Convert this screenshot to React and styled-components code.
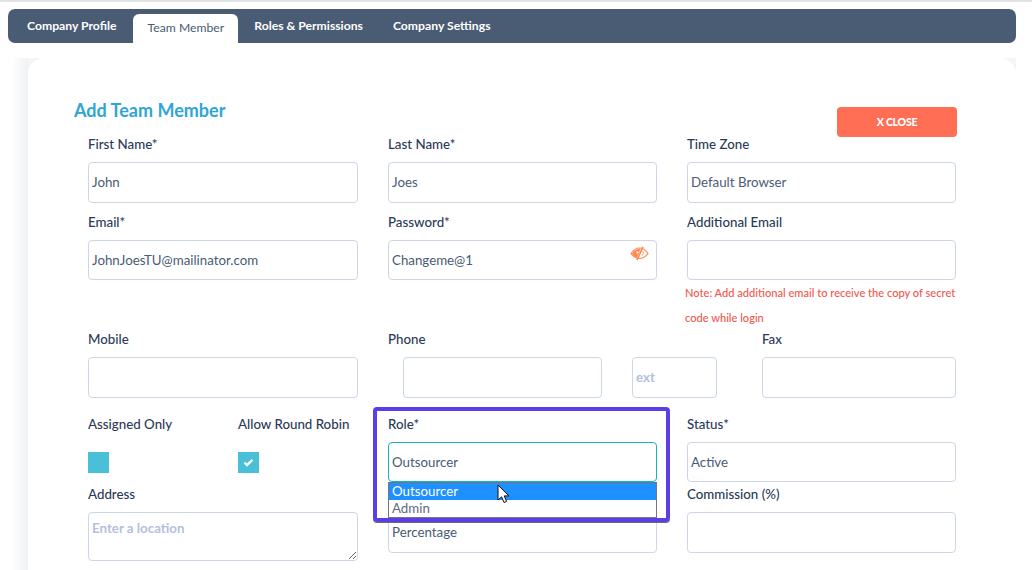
import React from "react"
import styled, { createGlobalStyle } from "styled-components"

const Global = createGlobalStyle`
  html, body {
    margin: 0;
    padding: 0;
    background: #fff;
    font-family: "Lato", "Liberation Sans", sans-serif;
  }
  * {
    box-sizing: border-box;
  }
`

const Page = styled.div`
  width: 1032px;
  height: 570px;
  overflow: hidden;
  border-top: 2px solid #e2e2e2;
  padding: 7px 16px 0 8px;
`
const TabBar = styled.div`
  display: flex;
  align-items: flex-end;
  height: 34px;
  padding-left: 4px;
  background: #4a5b74;
  border-radius: 7px;
`
const Tab = styled.div`
  height: ${({ $active }) => ($active ? "29px" : "34px")};
  margin: ${({ $active }) => ($active ? "0 1px" : "0")};
  padding: ${({ $active }) => ($active ? "6px 14px 0 15px" : "0 15px")};
  line-height: ${({ $active }) => ($active ? "16px" : "33px")};
  font-size: 12.2px;
  font-weight: ${({ $active }) => ($active ? 400 : 700)};
  color: ${({ $active }) => ($active ? "#4a5b74" : "#fff")};
  background: ${({ $active }) => ($active ? "#fff" : "transparent")};
  border-radius: 6px 6px 0 0;
  white-space: nowrap;
`
const CardShell = styled.div`
  margin: 15px 0 0 4px;
  padding-left: 16px;
  background: linear-gradient(90deg, #fff 0, #f0f1f4 16px, #f5f5f5 16px);
`
const Card = styled.div`
  position: relative;
  height: 600px;
  padding: 42px 59px 0 46px;
  background: #fff;
  border-radius: 16px 16px 0 0;
`
const TitleRow = styled.div`
  display: flex;
  justify-content: space-between;
  height: 35px;
`
const Title = styled.h2`
  margin: 0;
  font-size: 18px;
  line-height: 20px;
  font-weight: 700;
  color: #2ea5d8;
`
const CloseButton = styled.div`
  width: 120px;
  height: 30px;
  margin-top: 7px;
  background: #ff6e55;
  border-radius: 4px;
  color: #fff;
  font-size: 10.6px;
  font-weight: 900;
  letter-spacing: -0.3px;
  line-height: 30px;
  text-align: center;
`
const Form = styled.div`
  padding-left: 14px;
`
const Row = styled.div`
  display: grid;
  grid-template-columns: ${({ $columns }) => $columns || "270px 269px 269px"};
  column-gap: 30px;
  margin-bottom: ${({ $gap }) => $gap ?? 10}px;
`
const Field = styled.div`
  min-width: 0;
  padding-left: ${({ $indent }) => $indent || 0}px;
`
const Pair = styled.div`
  display: grid;
  grid-template-columns: 150px 120px;
`
const Label = styled.div`
  height: 18px;
  margin-bottom: 9px;
  font-size: 13.3px;
  font-weight: 500;
  line-height: 18px;
  color: #2b3a57;
  white-space: nowrap;
`
const InputWrap = styled.div`
  position: relative;
`
const Input = styled.input`
  display: block;
  width: 100%;
  height: ${({ $h }) => $h || 40}px;
  padding: 0 3px ${({ $h }) => ($h ? 2 : 0)}px;
  background: #fff;
  border: 1px solid ${({ $focus }) => ($focus ? "#12b5b8" : "#cdd6e6")};
  border-radius: 4px;
  outline: none;
  font-family: inherit;
  font-size: 13.3px;
  color: #4a5b74;
  &::placeholder {
    color: #b4c0dc;
    font-weight: 700;
    opacity: 1;
  }
`
const PhoneInput = styled(Input)`
  width: 199px;
  margin-left: 15px;
`
const ExtInput = styled(Input)`
  margin-top: 27px;
`
const TextArea = styled.textarea`
  display: block;
  width: 100%;
  height: 49px;
  padding: 7px 3px;
  background: #fff;
  border: 1px solid #cdd6e6;
  border-radius: 4px;
  outline: none;
  font-family: inherit;
  font-size: 13.3px;
  color: #4a5b74;
  &::placeholder {
    color: #b4c0dc;
    font-weight: 700;
    opacity: 1;
  }
`
const EyeIcon = styled.svg`
  position: absolute;
  top: 6px;
  right: 8px;
  width: 19px;
  height: 15px;
`
const Note = styled.div`
  height: 50px;
  margin: 0 -4px 0 -2px;
  font-size: 11.1px;
  font-weight: 500;
  line-height: 25px;
  color: #f2564f;
`
const PhoneRow = styled.div`
  display: grid;
  grid-template-columns: 214px 85px 209px;
  column-gap: 30px;
`
const Check = styled.div`
  display: flex;
  align-items: center;
  justify-content: center;
  width: 21px;
  height: 21px;
  margin-top: 19px;
  background: #49bfd8;
`
const Dropdown = styled.div`
  position: absolute;
  top: 100%;
  left: 0;
  right: 0;
  z-index: 2;
  background: #fff;
  border: 1px solid #767676;
  font-size: 13.3px;
  line-height: 16px;
`
const Option = styled.div`
  height: 17px;
  padding-left: 3px;
  background: ${({ $selected }) => ($selected ? "#1e90ff" : "#fff")};
  color: ${({ $selected }) => ($selected ? "#fff" : "#5d6b80")};
`
const Highlight = styled.div`
  position: absolute;
  left: 345px;
  top: 349px;
  width: 297px;
  height: 115px;
  border: 4px solid #5b3ee8;
  border-radius: 4px;
  box-shadow: 0 1px 0 #6b6b6b;
  pointer-events: none;
  z-index: 3;
`
const Cursor = styled.svg`
  position: absolute;
  left: 469px;
  top: 426px;
  width: 14px;
  height: 21px;
  z-index: 4;
`

function Text({ label, value, h }) {
  return (
    <Field>
      <Label>{label}</Label>
      <Input $h={h} readOnly value={value || ""} />
    </Field>
  )
}

function App() {
  return (
    <Page>
      <Global />
      <TabBar>
        <Tab>Company Profile</Tab>
        <Tab $active>Team Member</Tab>
        <Tab>Roles &amp; Permissions</Tab>
        <Tab>Company Settings</Tab>
      </TabBar>
      <CardShell>
        <Card>
          <TitleRow>
            <Title>Add Team Member</Title>
            <CloseButton>X CLOSE</CloseButton>
          </TitleRow>
          <Form>
            <Row>
              <Text label="First Name*" value="John" h={41} />
              <Text label="Last Name*" value="Joes" h={41} />
              <Text label="Time Zone" value="Default Browser" h={41} />
            </Row>
            <Row $gap={0}>
              <Text label="Email*" value="JohnJoesTU@mailinator.com" />
              <Field>
                <Label>Password*</Label>
                <InputWrap>
                  <Input readOnly value="Changeme@1" />
                  <EyeIcon viewBox="0 0 19 15" fill="none" stroke="#ff8a50" strokeWidth="1.2">
                    <path d="M1 7.5 C4 3 7 2 9.5 2 C12 2 15 3 18 7.5 C15 11.5 12 12.5 9.5 12.5 C7 12.5 4 11.5 1 7.5 Z" />
                    <path d="M2 7.5 C4 4 7 2.6 10.6 2.4 L7 12 C5 11.6 3.4 10 2 7.5 Z" fill="#ff8a50" stroke="none" />
                    <circle cx="7.4" cy="6.4" r="1.1" fill="#fff" stroke="none" />
                    <path d="M13 0.8 L7 14.2" strokeWidth="1.6" />
                    <path d="M13 5.4 C13.6 7 13.2 8.6 12 9.8" strokeWidth="0.9" />
                  </EyeIcon>
                </InputWrap>
              </Field>
              <Field>
                <Text label="Additional Email" />
                <Note>Note: Add additional email to receive the copy of secret code while login</Note>
              </Field>
            </Row>
            <Row $columns="270px 568px" $gap={17}>
              <Text label="Mobile" h={41} />
              <PhoneRow>
                <Field>
                  <Label>Phone</Label>
                  <PhoneInput $h={41} readOnly />
                </Field>
                <ExtInput $h={41} readOnly placeholder="ext" />
                <Field $indent={15}>
                  <Label>Fax</Label>
                  <Input $h={41} readOnly />
                </Field>
              </PhoneRow>
            </Row>
            <Row $gap={3}>
              <Pair>
                <Field>
                  <Label>Assigned Only</Label>
                  <Check />
                </Field>
                <Field>
                  <Label>Allow Round Robin</Label>
                  <Check>
                    <svg width="11" height="9" viewBox="0 0 11 9">
                      <path d="M1.5 4.5 L4 7 L9.5 1.8" fill="none" stroke="#fff" strokeWidth="2.4" />
                    </svg>
                  </Check>
                </Field>
              </Pair>
              <Field>
                <Label>Role*</Label>
                <InputWrap>
                  <Input $focus readOnly value="Outsourcer" />
                  <Dropdown>
                    <Option $selected>Outsourcer</Option>
                    <Option>Admin</Option>
                  </Dropdown>
                </InputWrap>
              </Field>
              <Text label="Status*" value="Active" />
            </Row>
            <Row>
              <Field>
                <Label>Address</Label>
                <TextArea readOnly placeholder="Enter a location" />
              </Field>
              <Field>
                <Label />
                <Input $h={41} readOnly value="Percentage" />
              </Field>
              <Text label="Commission (%)" h={41} />
            </Row>
          </Form>
          <Highlight />
          <Cursor viewBox="0 0 14 21">
            <path d="M1 1 L1 16 L4.6 12.8 L7 18.5 L9.6 17.4 L7.2 11.9 L12 11.9 Z" fill="#fff" stroke="#111" strokeWidth="1" />
          </Cursor>
        </Card>
      </CardShell>
    </Page>
  )
}

export default App
